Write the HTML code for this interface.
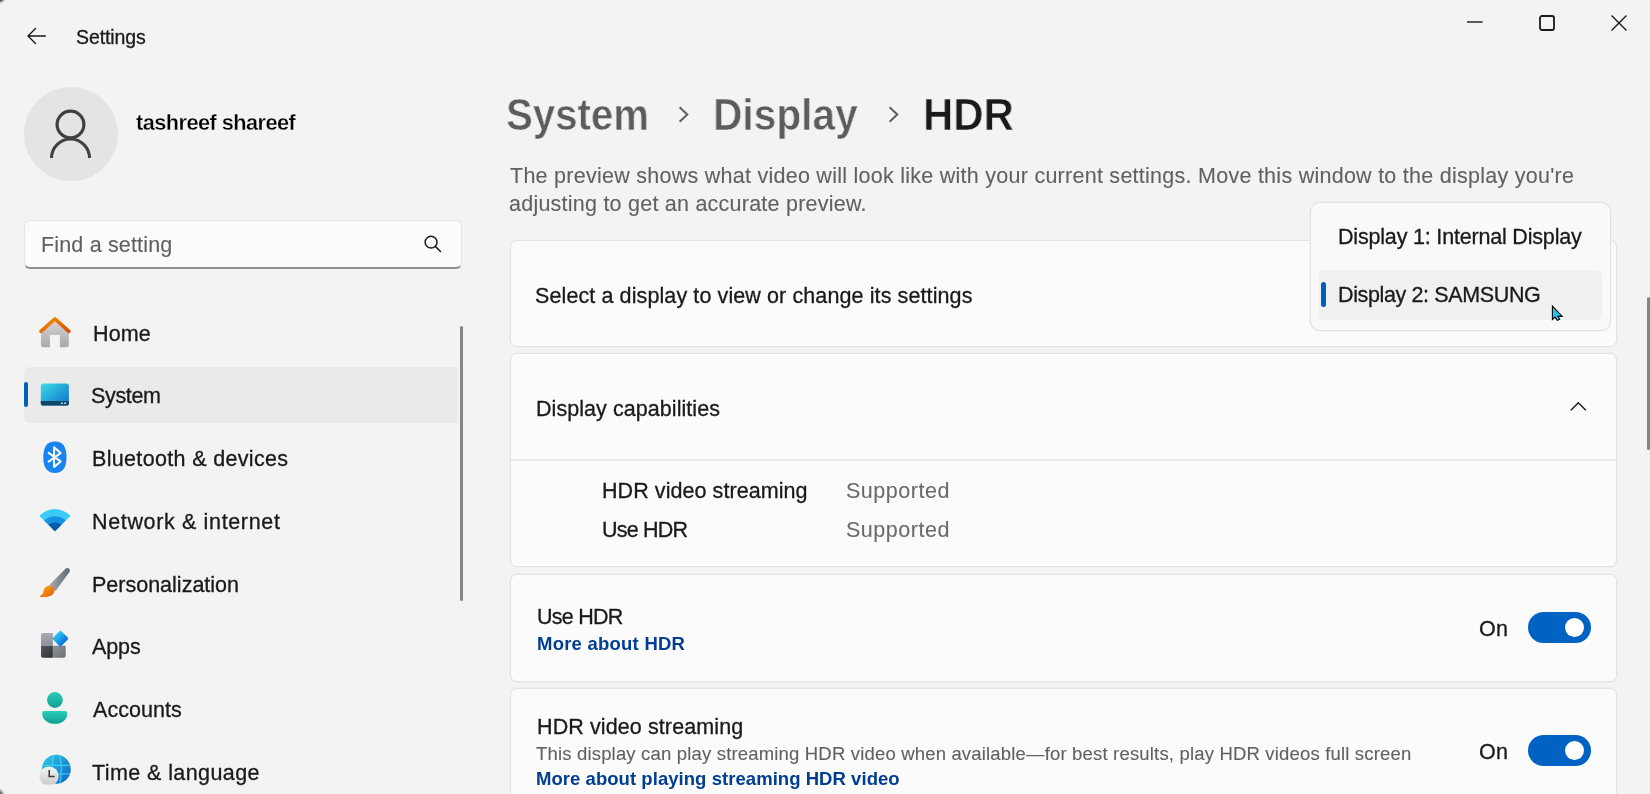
<!DOCTYPE html>
<html>
<head>
<meta charset="utf-8">
<style>
html,body{margin:0;padding:0;}
body{width:1650px;height:794px;overflow:hidden;background:#f3f3f3;position:relative;font-family:"Liberation Sans",sans-serif;color:#1a1a1a;}
.a{position:absolute;}
.t{position:absolute;white-space:nowrap;line-height:1;will-change:transform;-webkit-text-stroke:0.3px currentColor;}
.card{position:absolute;left:510px;width:1107px;background:#fbfbfb;border:1px solid #e3e3e3;border-radius:7px;box-sizing:border-box;box-shadow:0 0 0 0.5px #ebebeb;}
.nav{font-size:21.5px;}
svg{position:absolute;overflow:visible;}
</style>
</head>
<body>

<div class="a" style="left:-6px;top:-6px;width:10px;height:8px;border-radius:50%;background:#222;filter:blur(1.2px);"></div>
<div class="a" style="left:-6px;top:790px;width:9px;height:9px;border-radius:50%;background:#666;filter:blur(1.2px);"></div>
<!-- title bar -->
<svg style="left:26.5px;top:26.5px" width="20" height="18" viewBox="0 0 20 18"><path d="M9 1 L1 9 L9 17 M1 9 H18.8" fill="none" stroke="#1a1a1a" stroke-width="1.3"/></svg>

<svg style="left:1467px;top:21px" width="16" height="2"><rect x="0" y="0.3" width="15.6" height="1.4" fill="#1a1a1a"/></svg>
<svg style="left:1539px;top:15px" width="16" height="16"><rect x="1" y="1" width="14" height="14" rx="2" fill="none" stroke="#1a1a1a" stroke-width="1.8"/></svg>
<svg style="left:1611px;top:15px" width="16" height="16"><path d="M0.5 0.5 L15.5 15.5 M15.5 0.5 L0.5 15.5" fill="none" stroke="#1a1a1a" stroke-width="1.4"/></svg>

<!-- avatar -->
<div class="a" style="left:23.5px;top:87px;width:94px;height:94px;border-radius:50%;background:#e4e4e4;"></div>
<svg style="left:50px;top:108.7px" width="42" height="50" viewBox="0 0 42 50"><circle cx="20.5" cy="15.5" r="13.4" fill="none" stroke="#404040" stroke-width="3.2"/><path d="M1.5 49 A19 19 0 0 1 39.5 49" fill="none" stroke="#404040" stroke-width="3"/></svg>

<!-- search -->
<div class="a" style="left:24px;top:219.5px;width:438px;height:49px;box-sizing:border-box;background:#fbfbfb;border:1px solid #e5e5e5;border-bottom:2px solid #8d8d8d;border-radius:6px;"></div>
<svg style="left:423px;top:234px" width="20" height="20" viewBox="0 0 20 20"><circle cx="8.05" cy="8.15" r="5.9" fill="none" stroke="#1a1a1a" stroke-width="1.5"/><path d="M12.3 12.4 L18 18" stroke="#1a1a1a" stroke-width="1.5"/></svg>

<!-- nav -->
<div class="a" style="left:23.7px;top:366.7px;width:434.3px;height:56px;background:#eaeaea;border-radius:6px 0 0 6px;"></div>
<div class="a" style="left:23.7px;top:382px;width:4.4px;height:25px;background:#005fb8;border-radius:2.2px;"></div>
<div class="a" style="left:459.5px;top:325.5px;width:3.5px;height:275px;background:#858585;border-radius:2px;"></div>



<!-- nav icons -->
<svg style="left:34px;top:312px" width="42" height="40" viewBox="0 0 42 40">
<defs><linearGradient id="hg" x1="0" y1="0" x2="0" y2="1"><stop offset="0" stop-color="#d6d6d6"/><stop offset="1" stop-color="#a9a9a9"/></linearGradient>
<linearGradient id="rg" x1="0" y1="0" x2="1" y2="1"><stop offset="0" stop-color="#f59400"/><stop offset="1" stop-color="#dc4b00"/></linearGradient></defs>
<path d="M7 20.3 L20.9 8.3 L34.8 20.3 V33 Q34.8 35.2 32.6 35.2 H25.9 V22.9 H15.9 V35.2 H9.2 Q7 35.2 7 33 Z" fill="url(#hg)"/>
<path d="M6.9 19.4 L20.9 6.9 L34.9 19.4" fill="none" stroke="url(#rg)" stroke-width="3.5" stroke-linecap="round" stroke-linejoin="round"/>
</svg>
<svg style="left:34px;top:376px" width="42" height="36" viewBox="0 0 42 36">
<defs><linearGradient id="sg" x1="0" y1="0" x2="1" y2="1"><stop offset="0" stop-color="#3edbe6"/><stop offset="1" stop-color="#0d6fcb"/></linearGradient></defs>
<rect x="6.8" y="7.5" width="28.1" height="22" rx="2.6" fill="url(#sg)"/>
<path d="M6.8 25 H34.9 V26.9 Q34.9 29.5 32.3 29.5 H9.4 Q6.8 29.5 6.8 26.9 Z" fill="#0c4868"/>
<rect x="26.8" y="26.4" width="2.2" height="1.6" fill="#9fc4d6"/><rect x="30" y="26.4" width="2.2" height="1.6" fill="#9fc4d6"/>
</svg>
<svg style="left:34px;top:436px" width="42" height="42" viewBox="0 0 42 42">
<path d="M20.9 5.6 C28.5 5.6 32.5 10.5 32.5 21.3 C32.5 32 28.5 37 20.9 37 C13.3 37 9.3 32 9.3 21.3 C9.3 10.5 13.3 5.6 20.9 5.6 Z" fill="#1784ef"/>
<path d="M14.6 16.9 L26.6 25.4 L20.1 31 V11.3 L26.6 17.1 L14.6 25.6" fill="none" stroke="#fff" stroke-width="2" stroke-linecap="round" stroke-linejoin="round"/>
</svg>
<svg style="left:34px;top:500px" width="42" height="40" viewBox="0 0 42 40">
<path d="M20.9 31.2 L5.9 16.4 Q5.3 15.8 6 15.2 A21.3 21.3 0 0 1 35.8 15.2 Q36.5 15.8 35.9 16.4 Z" fill="#3ccbf4"/>
<path d="M20.9 31.2 L10.2 20.6 A15.2 15.2 0 0 1 31.6 20.6 Z" fill="#1592e1"/>
<path d="M20.9 31.2 L14.5 24.8 A9.1 9.1 0 0 1 27.3 24.8 Z" fill="#0b5aa9"/>
</svg>
<svg style="left:34px;top:562px" width="42" height="42" viewBox="0 0 42 42">
<defs><linearGradient id="bh" x1="0" y1="0" x2="1" y2="0"><stop offset="0" stop-color="#a7aeb5"/><stop offset="1" stop-color="#5f666d"/></linearGradient>
<linearGradient id="bo" x1="0" y1="0" x2="1" y2="1"><stop offset="0" stop-color="#ffb912"/><stop offset="1" stop-color="#e24f0b"/></linearGradient></defs>
<path d="M31.2 6.9 C33.4 4.7 36.8 6.5 35.7 9.6 L21.6 28.9 L14.8 23.6 Z" fill="url(#bh)"/>
<path d="M15 23.7 C18.6 23.3 21.3 26.3 20.2 29.9 C19.1 33.3 14.5 35.6 6.4 34.9 C5.6 34.8 5.7 34.1 6.3 33.7 C8.9 32 9.3 30.5 9.6 28.5 C10.1 25.5 12.5 24 15 23.7 Z" fill="url(#bo)"/>
</svg>
<svg style="left:34px;top:624px" width="42" height="40" viewBox="0 0 42 40">
<defs><linearGradient id="ad" x1="0" y1="0.5" x2="1" y2="0.5"><stop offset="0" stop-color="#31c4f3"/><stop offset="1" stop-color="#0b6fdf"/></linearGradient></defs>
<defs><linearGradient id="a1" x1="0" y1="0" x2="0" y2="1"><stop offset="0" stop-color="#a9adb2"/><stop offset="1" stop-color="#8d9196"/></linearGradient><linearGradient id="a2" x1="0" y1="0" x2="1" y2="1"><stop offset="0" stop-color="#55585c"/><stop offset="1" stop-color="#2e3134"/></linearGradient><linearGradient id="a3" x1="0" y1="0" x2="1" y2="1"><stop offset="0" stop-color="#8f9398"/><stop offset="1" stop-color="#6c7075"/></linearGradient></defs><path d="M9 9 H18.9 V21.7 H7 V11 Q7 9 9 9 Z" fill="url(#a1)"/>
<path d="M7 21.7 H18.9 V33.7 H9 Q7 33.7 7 31.7 Z" fill="url(#a2)"/>
<path d="M18.9 21.7 H31.7 V31.7 Q31.7 33.7 29.7 33.7 H18.9 Z" fill="url(#a3)"/>
<rect x="-5.9" y="-5.9" width="11.8" height="11.8" rx="1.4" fill="url(#ad)" transform="translate(26.4 14.6) rotate(45)"/>
</svg>
<svg style="left:34px;top:686px" width="42" height="42" viewBox="0 0 42 42">
<defs><linearGradient id="tg" x1="0" y1="0" x2="0" y2="1"><stop offset="0" stop-color="#2ccdb8"/><stop offset="1" stop-color="#0f9f90"/></linearGradient></defs>
<circle cx="20.9" cy="14" r="7.9" fill="url(#tg)"/>
<path d="M10.5 25.1 H31 Q33.3 25.1 33.3 27.4 C33.3 33.5 28 37.8 20.9 37.8 C13.8 37.8 8.2 33.5 8.2 27.4 Q8.2 25.1 10.5 25.1 Z" fill="url(#tg)"/>
</svg>
<svg style="left:34px;top:750px" width="42" height="42" viewBox="0 0 42 42">
<defs><linearGradient id="gg" x1="0" y1="0" x2="1" y2="1"><stop offset="0" stop-color="#33cde6"/><stop offset="1" stop-color="#0f5fc8"/></linearGradient>
<linearGradient id="cg" x1="0" y1="0" x2="0" y2="1"><stop offset="0" stop-color="#f4f4f4"/><stop offset="1" stop-color="#c9c9c9"/></linearGradient>
<clipPath id="gc"><circle cx="22.3" cy="19.25" r="14.5"/></clipPath></defs>
<circle cx="22.3" cy="19.25" r="14.5" fill="url(#gg)"/>
<g clip-path="url(#gc)" fill="none" stroke="#3fd9f0" stroke-width="1.3" opacity="0.85">
<path d="M7 15.3 H37 M7 23.9 H37"/><path d="M19.5 5 Q16.5 19.4 19.5 34"/><path d="M25.8 5 Q28.6 19.4 25.8 34"/></g>
<clipPath id="cc"><rect x="0" y="0" width="42" height="34.6"/></clipPath><circle cx="15" cy="26.1" r="9.7" fill="url(#cg)" clip-path="url(#cc)"/>
<path d="M15.2 20 V26.6 H20.7" fill="none" stroke="#3a3a3a" stroke-width="1.5"/>
</svg>

<!-- breadcrumb -->
<svg style="left:678px;top:106px" width="12" height="18"><path d="M1.6 1.2 L9.3 8.5 L1.6 15.8" fill="none" stroke="#5c5c5c" stroke-width="2"/></svg>
<svg style="left:888px;top:106px" width="12" height="18"><path d="M1.6 1.2 L9.3 8.5 L1.6 15.8" fill="none" stroke="#5c5c5c" stroke-width="2"/></svg>


<!-- card 1 -->
<div class="card" style="top:239.5px;height:107px;"></div>

<!-- card 2 -->
<div class="card" style="top:353px;height:214px;"></div>
<div class="a" style="left:511px;top:459px;width:1105px;height:1.5px;background:#e8e8e8;"></div>
<svg style="left:1570px;top:401px" width="17" height="10"><path d="M0.8 9.2 L8.3 1.7 L15.8 9.2" fill="none" stroke="#1a1a1a" stroke-width="1.4"/></svg>

<!-- card 3 -->
<div class="card" style="top:573.5px;height:108px;"></div>
<div class="a" style="left:1528px;top:611.5px;width:63px;height:31.5px;border-radius:16px;background:#0063c3;"></div>
<div class="a" style="left:1565px;top:618px;width:19px;height:19px;border-radius:50%;background:#fff;"></div>

<!-- card 4 -->
<div class="card" style="top:688px;height:130px;"></div>
<div class="a" style="left:1528px;top:734.5px;width:63px;height:31.5px;border-radius:16px;background:#0063c3;"></div>
<div class="a" style="left:1565px;top:741px;width:19px;height:19px;border-radius:50%;background:#fff;"></div>

<!-- right scrollbar -->
<div class="a" style="left:1647px;top:297px;width:3px;height:153px;background:#858585;border-radius:2px;"></div>

<!-- flyout -->
<div class="a" style="left:1310px;top:201.5px;width:301px;height:129px;box-sizing:border-box;background:#f9f9f9;border:1px solid #e2e2e2;border-radius:10px;box-shadow:0 0 0 0.5px #ebebeb;"></div>
<div class="a" style="left:1319px;top:269.5px;width:283px;height:50.5px;background:#f0f0f0;border-radius:5px;"></div>
<div class="a" style="left:1320.5px;top:282px;width:5px;height:25px;background:#005fb8;border-radius:3px;"></div>

<svg style="left:1550px;top:304px" width="16" height="20" viewBox="0 0 16 20"><path d="M2.4 2.2 V15.6 L5 13.2 L7.3 16.4 L9.7 15.2 L7.9 12.4 H12.2 Z" fill="#1fc6f2" stroke="#000" stroke-width="1.1" stroke-linejoin="miter"/></svg>
<div class="t" id="settings" style="left:75.74px;top:27.50px;font-size:19.5px;letter-spacing:-0.106px;">Settings</div>
<div class="t" id="name" style="left:136.21px;top:112.00px;font-size:21.7px;font-weight:bold;-webkit-text-stroke:0.3px #f3f3f3;color:#000000;letter-spacing:-0.520px;">tashreef shareef</div>
<div class="t" id="find" style="left:41.03px;top:235.22px;font-size:21.5px;-webkit-text-stroke:0.1px currentColor;color:#5f5f5f;letter-spacing:0.167px;">Find a setting</div>
<div class="t" id="home" style="left:93.22px;top:324.00px;font-size:21.5px;letter-spacing:0.125px;">Home</div>
<div class="t" id="system" style="left:91.48px;top:386.22px;font-size:21.5px;letter-spacing:-0.336px;">System</div>
<div class="t" id="bt" style="left:91.99px;top:449.32px;font-size:21.5px;letter-spacing:0.334px;">Bluetooth &amp; devices</div>
<div class="t" id="net" style="left:91.99px;top:512.00px;font-size:21.5px;letter-spacing:0.648px;">Network &amp; internet</div>
<div class="t" id="pers" style="left:91.99px;top:575.00px;font-size:21.5px;">Personalization</div>
<div class="t" id="apps" style="left:92.36px;top:637.00px;font-size:21.5px;letter-spacing:-0.120px;">Apps</div>
<div class="t" id="acc" style="left:92.72px;top:700.00px;font-size:21.5px;letter-spacing:0.039px;">Accounts</div>
<div class="t" id="time" style="left:91.99px;top:763.40px;font-size:21.5px;letter-spacing:0.415px;">Time &amp; language</div>
<div class="t" id="bc_sys" style="left:506.29px;top:92.40px;font-size:45px;font-weight:bold;-webkit-text-stroke:0.6px #f3f3f3;color:#5c5c5c;transform:scaleX(0.8932);transform-origin:0 0;">System</div>
<div class="t" id="bc_disp" style="left:713.05px;top:92.22px;font-size:45px;font-weight:bold;-webkit-text-stroke:0.6px #f3f3f3;color:#5c5c5c;transform:scaleX(0.9044);transform-origin:0 0;">Display</div>
<div class="t" id="bc_hdr" style="left:923.46px;top:92.22px;font-size:45px;font-weight:bold;-webkit-text-stroke:0.6px #f3f3f3;transform:scaleX(0.9318);transform-origin:0 0;">HDR</div>
<div class="t" id="desc1" style="left:509.60px;top:166.22px;font-size:21.5px;-webkit-text-stroke:0.1px currentColor;color:#616161;letter-spacing:0.262px;">The preview shows what video will look like with your current settings. Move this window to the display you're</div>
<div class="t" id="desc2" style="left:509.49px;top:194.00px;font-size:21.5px;-webkit-text-stroke:0.1px currentColor;color:#616161;letter-spacing:0.236px;">adjusting to get an accurate preview.</div>
<div class="t" id="sel" style="left:535.00px;top:286.00px;font-size:21.5px;letter-spacing:0.104px;">Select a display to view or change its settings</div>
<div class="t" id="dispcap" style="left:535.87px;top:398.82px;font-size:21.5px;letter-spacing:0.059px;">Display capabilities</div>
<div class="t" id="hvs" style="left:601.99px;top:480.72px;font-size:21.5px;letter-spacing:0.067px;">HDR video streaming</div>
<div class="t" id="sup1" style="left:845.82px;top:480.72px;font-size:21.5px;-webkit-text-stroke:0.1px currentColor;color:#6b6b6b;letter-spacing:0.523px;">Supported</div>
<div class="t" id="usehdr1" style="left:602.22px;top:520.00px;font-size:21.5px;letter-spacing:-0.804px;">Use HDR</div>
<div class="t" id="sup2" style="left:845.82px;top:520.00px;font-size:21.5px;-webkit-text-stroke:0.1px currentColor;color:#6b6b6b;letter-spacing:0.523px;">Supported</div>
<div class="t" id="usehdr3" style="left:536.61px;top:606.72px;font-size:21.5px;letter-spacing:-0.769px;">Use HDR</div>
<div class="t" id="more1" style="left:536.59px;top:634.82px;font-size:18.5px;font-weight:bold;-webkit-text-stroke:0;color:#003e92;letter-spacing:0.232px;">More about HDR</div>
<div class="t" id="on1" style="left:1478.88px;top:618.90px;font-size:21.5px;letter-spacing:0.323px;">On</div>
<div class="t" id="hvs4" style="left:536.57px;top:716.90px;font-size:21.5px;letter-spacing:0.102px;">HDR video streaming</div>
<div class="t" id="desc4" style="left:536.34px;top:744.72px;font-size:18.5px;-webkit-text-stroke:0.1px currentColor;color:#616161;letter-spacing:0.175px;">This display can play streaming HDR video when available—for best results, play HDR videos full screen</div>
<div class="t" id="more4" style="left:536.20px;top:769.82px;font-size:18.5px;font-weight:bold;-webkit-text-stroke:0;color:#003e92;letter-spacing:0.049px;">More about playing streaming HDR video</div>
<div class="t" id="on2" style="left:1478.88px;top:741.70px;font-size:21.5px;letter-spacing:0.323px;">On</div>
<div class="t" id="d1" style="left:1337.61px;top:227.40px;font-size:21.5px;letter-spacing:-0.185px;">Display 1: Internal Display</div>
<div class="t" id="d2" style="left:1337.64px;top:284.90px;font-size:21.5px;letter-spacing:-0.367px;">Display 2: SAMSUNG</div>
</body>
</html>
